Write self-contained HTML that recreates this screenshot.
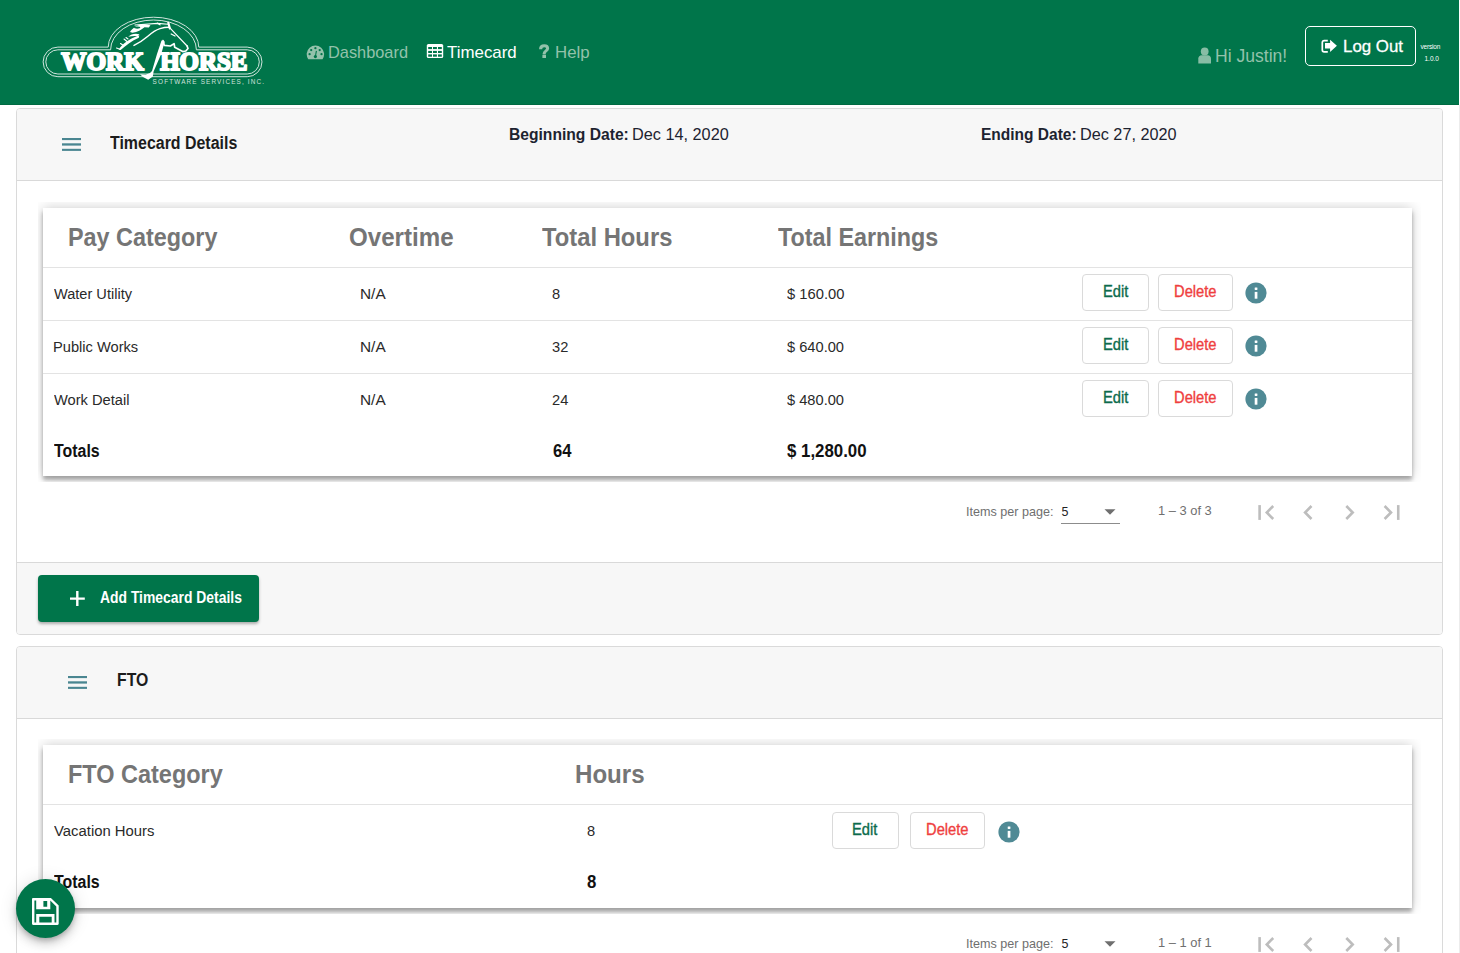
<!DOCTYPE html>
<html><head><meta charset="utf-8"><style>
*{box-sizing:border-box;margin:0;padding:0}
html,body{width:1460px;height:953px;overflow:hidden;background:#fff;font-family:"Liberation Sans",sans-serif;color:#212121}
.t{position:absolute;white-space:nowrap;line-height:1}
.td{color:#2a2a2a}
.a{position:absolute}
#hdr{position:absolute;left:0;top:0;width:1459px;height:105px;background:#00754a;box-shadow:inset 0 -1px 0 #006a42}
.nav{color:#93c2ab}
.card{position:absolute;left:16px;width:1427px;background:#fff;border:1px solid #dadada;border-radius:4px;overflow:hidden}
.sec{position:absolute;left:0;width:100%;background:#f7f7f7}
.tbl{position:absolute;width:1369px;background:#fff;box-shadow:0 4px 4px rgba(0,0,0,.3),0 0 12px rgba(0,0,0,.2)}
.th{font-weight:bold;color:#757575}
.hl{position:absolute;left:43px;width:1369px;height:1px;background:#e3e3e3}
.btn{position:absolute;height:37px;border:1px solid #dadada;border-radius:4px;background:#fff}
.edit{color:#0c6b4c;-webkit-text-stroke:0.35px #0c6b4c}
.del{color:#ef3f3f;-webkit-text-stroke:0.35px #ef3f3f}
.pg{color:#6f6f6f}
</style></head><body>
<div id="hdr"></div>
<div class="a" style="left:1459px;top:105px;width:1px;height:848px;background:#ececec"></div>
<div class="t nav" style="left:327.76px;top:44.12px;font-size:17.39px;transform:scaleX(0.9410);transform-origin:0 0;">Dashboard</div>
<div class="t " style="left:446.60px;top:44.12px;font-size:17.39px;transform:scaleX(0.9718);transform-origin:0 0;color:#fff">Timecard</div>
<div class="t nav" style="left:554.63px;top:44.12px;font-size:17.39px;transform:scaleX(0.9676);transform-origin:0 0;">Help</div>
<div class="t nav" style="left:1214.92px;top:47.53px;font-size:17.97px;transform:scaleX(0.9775);transform-origin:0 0;">Hi Justin!</div>
<div class="a" style="left:1305px;top:26px;width:111px;height:40px;border:1.2px solid #fff;border-radius:5px"></div>
<div class="t " style="left:1343.32px;top:38.44px;font-size:17.25px;transform:scaleX(0.9783);transform-origin:0 0;color:#fff;-webkit-text-stroke:0.3px #fff">Log Out</div>
<div class="t " style="left:1420.5px;top:43.98px;font-size:6.5px;color:#fff;letter-spacing:-0.2px">version</div>
<div class="t " style="left:1424.5px;top:56.48px;font-size:6.5px;color:#fff">1.0.0</div>
<div class="card" style="top:108px;height:527px"><div class="sec" style="top:0;height:72px;border-bottom:1px solid #d9d9d9"></div><div class="sec" style="top:453px;height:74px;border-top:1px solid #d9d9d9"></div></div>
<div class="t " style="left:110.40px;top:133.68px;font-size:18.26px;transform:scaleX(0.8731);transform-origin:0 0;font-weight:bold;color:#1c1c1c">Timecard Details</div>
<div class="t " style="left:509.05px;top:126.96px;font-size:16.52px;transform:scaleX(0.9460);transform-origin:0 0;font-weight:bold;color:#1d2330">Beginning Date:</div>
<div class="t " style="left:631.82px;top:126.96px;font-size:16.52px;transform:scaleX(0.9845);transform-origin:0 0;color:#1d2330">Dec 14, 2020</div>
<div class="t " style="left:980.97px;top:126.83px;font-size:16.67px;transform:scaleX(0.9310);transform-origin:0 0;font-weight:bold;color:#1d2330">Ending Date:</div>
<div class="t " style="left:1080.23px;top:126.83px;font-size:16.67px;transform:scaleX(0.9742);transform-origin:0 0;color:#1d2330">Dec 27, 2020</div>
<div class="a" style="left:38px;top:202px;width:1383px;height:280px;overflow:hidden"><div class="tbl" style="left:5px;top:6px;height:268px"></div></div>
<div class="t th" style="left:68.11px;top:224.02px;font-size:26.09px;transform:scaleX(0.8964);transform-origin:0 0;">Pay Category</div>
<div class="t th" style="left:349.47px;top:224.02px;font-size:26.09px;transform:scaleX(0.9252);transform-origin:0 0;">Overtime</div>
<div class="t th" style="left:542.30px;top:224.02px;font-size:26.09px;transform:scaleX(0.9120);transform-origin:0 0;">Total Hours</div>
<div class="t th" style="left:778.00px;top:224.02px;font-size:26.09px;transform:scaleX(0.8944);transform-origin:0 0;">Total Earnings</div>
<div class="hl" style="top:267px"></div>
<div class="hl" style="top:320px"></div>
<div class="hl" style="top:373px"></div>
<div class="t td" style="left:53.80px;top:285.62px;font-size:15.51px;transform:scaleX(0.9398);transform-origin:0 0;">Water Utility</div>
<div class="t td" style="left:360.41px;top:285.62px;font-size:15.51px;transform:scaleX(0.9920);transform-origin:0 0;">N/A</div>
<div class="t td" style="left:552.45px;top:285.62px;font-size:15.51px;transform:scaleX(0.9450);transform-origin:0 0;">8</div>
<div class="t td" style="left:787.15px;top:285.62px;font-size:15.51px;transform:scaleX(0.9508);transform-origin:0 0;">$ 160.00</div>
<div class="btn" style="left:1082px;top:274px;width:67px"></div><div class="btn" style="left:1158px;top:274px;width:75px"></div>
<div class="t edit" style="left:1102.77px;top:283.67px;font-size:15.8px;transform:scaleX(0.9308);transform-origin:0 0;">Edit</div>
<div class="t del" style="left:1173.97px;top:283.67px;font-size:15.8px;transform:scaleX(0.9318);transform-origin:0 0;">Delete</div>
<svg class="a" style="left:1245px;top:282px" width="22" height="22" viewBox="0 0 22 22"><circle cx="11" cy="11" r="10.6" fill="#508a95"/><rect x="9.7" y="5.4" width="2.7" height="2.6" rx="0.4" fill="#fff"/><rect x="9.7" y="9.9" width="2.7" height="6.8" fill="#fff"/></svg>
<div class="t td" style="left:52.85px;top:338.62px;font-size:15.51px;transform:scaleX(0.9450);transform-origin:0 0;">Public Works</div>
<div class="t td" style="left:360.41px;top:338.62px;font-size:15.51px;transform:scaleX(0.9920);transform-origin:0 0;">N/A</div>
<div class="t td" style="left:552.45px;top:338.62px;font-size:15.51px;transform:scaleX(0.9450);transform-origin:0 0;">32</div>
<div class="t td" style="left:787.15px;top:338.62px;font-size:15.51px;transform:scaleX(0.9450);transform-origin:0 0;">$ 640.00</div>
<div class="btn" style="left:1082px;top:327px;width:67px"></div><div class="btn" style="left:1158px;top:327px;width:75px"></div>
<div class="t edit" style="left:1102.77px;top:336.67px;font-size:15.8px;transform:scaleX(0.9308);transform-origin:0 0;">Edit</div>
<div class="t del" style="left:1173.97px;top:336.67px;font-size:15.8px;transform:scaleX(0.9318);transform-origin:0 0;">Delete</div>
<svg class="a" style="left:1245px;top:335px" width="22" height="22" viewBox="0 0 22 22"><circle cx="11" cy="11" r="10.6" fill="#508a95"/><rect x="9.7" y="5.4" width="2.7" height="2.6" rx="0.4" fill="#fff"/><rect x="9.7" y="9.9" width="2.7" height="6.8" fill="#fff"/></svg>
<div class="t td" style="left:53.80px;top:391.62px;font-size:15.51px;transform:scaleX(0.9450);transform-origin:0 0;">Work Detail</div>
<div class="t td" style="left:360.41px;top:391.62px;font-size:15.51px;transform:scaleX(0.9920);transform-origin:0 0;">N/A</div>
<div class="t td" style="left:552.45px;top:391.62px;font-size:15.51px;transform:scaleX(0.9450);transform-origin:0 0;">24</div>
<div class="t td" style="left:787.15px;top:391.62px;font-size:15.51px;transform:scaleX(0.9450);transform-origin:0 0;">$ 480.00</div>
<div class="btn" style="left:1082px;top:380px;width:67px"></div><div class="btn" style="left:1158px;top:380px;width:75px"></div>
<div class="t edit" style="left:1102.77px;top:389.67px;font-size:15.8px;transform:scaleX(0.9308);transform-origin:0 0;">Edit</div>
<div class="t del" style="left:1173.97px;top:389.67px;font-size:15.8px;transform:scaleX(0.9318);transform-origin:0 0;">Delete</div>
<svg class="a" style="left:1245px;top:388px" width="22" height="22" viewBox="0 0 22 22"><circle cx="11" cy="11" r="10.6" fill="#508a95"/><rect x="9.7" y="5.4" width="2.7" height="2.6" rx="0.4" fill="#fff"/><rect x="9.7" y="9.9" width="2.7" height="6.8" fill="#fff"/></svg>
<div class="t " style="left:53.50px;top:443.04px;font-size:17.83px;transform:scaleX(0.8922);transform-origin:0 0;font-weight:bold;color:#111">Totals</div>
<div class="t " style="left:552.57px;top:443.04px;font-size:17.83px;transform:scaleX(0.9316);transform-origin:0 0;font-weight:bold;color:#111">64</div>
<div class="t " style="left:786.66px;top:443.04px;font-size:17.83px;transform:scaleX(0.9446);transform-origin:0 0;font-weight:bold;color:#111">$ 1,280.00</div>
<div class="t pg" style="left:965.99px;top:506.01px;font-size:12.46px;transform:scaleX(1.0119);transform-origin:0 0;">Items per page:</div>
<div class="t " style="left:1061.60px;top:506.01px;font-size:12.46px;color:#222">5</div>
<div class="a" style="left:1061px;top:523px;width:59px;height:1px;background:#8c8c8c"></div><svg class="a" style="left:1103.5px;top:508.5px" width="12" height="6" viewBox="0 0 12 6"><path d="M0.5 0.3H11.5L6 5.8Z" fill="#6f6f6f"/></svg>
<div class="t pg" style="left:1157.57px;top:505.14px;font-size:12.54px;transform:scaleX(1.0294);transform-origin:0 0;">1 – 3 of 3</div>
<svg class="a" style="left:1250px;top:500px" width="160" height="26" viewBox="0 0 160 26" fill="none" stroke="#bdbdbd" stroke-width="2.6"><path d="M9.6 5.1V19.9"/><path d="M23.2 6L16.8 12.5L23.2 19"/><path d="M61.5 6L55.1 12.5L61.5 19"/><path d="M96.3 6L102.7 12.5L96.3 19"/><path d="M134.6 6L141 12.5L134.6 19"/><path d="M148.25 5.1V19.9"/></svg>
<div class="a" style="left:38px;top:575px;width:221px;height:47px;background:#00754a;border-radius:4px;box-shadow:0 2px 3px rgba(0,0,0,.3)"></div>
<svg class="a" style="left:69px;top:590px" width="17" height="17" viewBox="0 0 17 17"><path d="M8.3 1V16M1 8.6H15.8" stroke="#fff" stroke-width="2.4"/></svg>
<div class="t " style="left:99.92px;top:589.97px;font-size:15.8px;transform:scaleX(0.8800);transform-origin:0 0;font-weight:bold;color:#fff">Add Timecard Details</div>
<div class="card" style="top:646px;height:330px"><div class="sec" style="top:0;height:72px;border-bottom:1px solid #d9d9d9"></div></div>
<div class="t " style="left:116.91px;top:672.24px;font-size:17.83px;transform:scaleX(0.8853);transform-origin:0 0;font-weight:bold;color:#1c1c1c">FTO</div>
<div class="a" style="left:38px;top:739px;width:1383px;height:175px;overflow:hidden"><div class="tbl" style="left:5px;top:6px;height:163px"></div></div>
<div class="t th" style="left:68.08px;top:762.27px;font-size:25.8px;transform:scaleX(0.9101);transform-origin:0 0;">FTO Category</div>
<div class="t th" style="left:575.25px;top:761.22px;font-size:26.09px;transform:scaleX(0.9236);transform-origin:0 0;">Hours</div>
<div class="hl" style="top:804px"></div>
<div class="t td" style="left:53.70px;top:822.62px;font-size:15.51px;transform:scaleX(0.9587);transform-origin:0 0;">Vacation Hours</div>
<div class="t td" style="left:586.95px;top:822.62px;font-size:15.51px;transform:scaleX(0.9450);transform-origin:0 0;">8</div>
<div class="btn" style="left:832px;top:812px;width:67px"></div><div class="btn" style="left:910px;top:812px;width:75px"></div>
<div class="t edit" style="left:852.47px;top:821.97px;font-size:15.8px;transform:scaleX(0.9308);transform-origin:0 0;">Edit</div>
<div class="t del" style="left:925.97px;top:821.97px;font-size:15.8px;transform:scaleX(0.9318);transform-origin:0 0;">Delete</div>
<svg class="a" style="left:997.5px;top:821px" width="22" height="22" viewBox="0 0 22 22"><circle cx="11" cy="11" r="10.6" fill="#508a95"/><rect x="9.7" y="5.4" width="2.7" height="2.6" rx="0.4" fill="#fff"/><rect x="9.7" y="9.9" width="2.7" height="6.8" fill="#fff"/></svg>
<div class="t " style="left:53.50px;top:873.64px;font-size:17.83px;transform:scaleX(0.8922);transform-origin:0 0;font-weight:bold;color:#111">Totals</div>
<div class="t " style="left:587.16px;top:873.64px;font-size:17.83px;transform:scaleX(0.9400);transform-origin:0 0;font-weight:bold;color:#111">8</div>
<div class="t pg" style="left:965.99px;top:938.41px;font-size:12.46px;transform:scaleX(1.0119);transform-origin:0 0;">Items per page:</div>
<div class="t " style="left:1061.60px;top:938.41px;font-size:12.46px;color:#222">5</div>
<div class="a" style="left:1061px;top:955.4px;width:59px;height:1px;background:#8c8c8c"></div><svg class="a" style="left:1103.5px;top:940.9px" width="12" height="6" viewBox="0 0 12 6"><path d="M0.5 0.3H11.5L6 5.8Z" fill="#6f6f6f"/></svg>
<div class="t pg" style="left:1157.57px;top:936.54px;font-size:12.54px;transform:scaleX(1.0294);transform-origin:0 0;">1 – 1 of 1</div>
<svg class="a" style="left:1250px;top:932.4px" width="160" height="26" viewBox="0 0 160 26" fill="none" stroke="#bdbdbd" stroke-width="2.6"><path d="M9.6 5.1V19.9"/><path d="M23.2 6L16.8 12.5L23.2 19"/><path d="M61.5 6L55.1 12.5L61.5 19"/><path d="M96.3 6L102.7 12.5L96.3 19"/><path d="M134.6 6L141 12.5L134.6 19"/><path d="M148.25 5.1V19.9"/></svg>
<svg class="a" style="left:62px;top:138px" width="20" height="14" viewBox="0 0 20 14"><g fill="#4a8691"><rect x="0" y="0" width="19" height="2.1"/><rect x="0" y="5.3" width="19" height="2.3"/><rect x="0" y="10.8" width="19" height="2.1"/></g></svg>
<svg class="a" style="left:68px;top:676px" width="20" height="14" viewBox="0 0 20 14"><g fill="#4a8691"><rect x="0" y="0" width="19" height="2.1"/><rect x="0" y="5.3" width="19" height="2.3"/><rect x="0" y="10.8" width="19" height="2.1"/></g></svg>
<div class="a" style="left:16px;top:879px;width:59px;height:59px;border-radius:50%;background:#00754a;box-shadow:0 3px 5px -1px rgba(0,0,0,.2),0 6px 10px 0 rgba(0,0,0,.14),0 1px 18px 0 rgba(0,0,0,.12)"></div>
<svg class="a" style="left:306px;top:45px" width="19" height="15" viewBox="0 0 19 15"><path fill="#93c2ab" d="M2.28 14.2A8.7 8.7 0 1 1 16.52 14.2Z"/><g fill="#00754a"><circle cx="3.6" cy="9.2" r="1.15"/><circle cx="5.2" cy="5.1" r="1.15"/><circle cx="9.4" cy="3.2" r="1.15"/><circle cx="13.7" cy="5.1" r="1.15"/><circle cx="15.5" cy="9.2" r="1.15"/><circle cx="9.4" cy="11.6" r="1.6"/></g><path d="M9.4 11.5L10.4 5.8" stroke="#00754a" stroke-width="1.1"/></svg>
<svg class="a" style="left:426px;top:44px" width="18" height="15" viewBox="0 0 18 15"><rect x="0.8" y="0.1" width="16.4" height="13.8" rx="1.5" fill="#fff"/><g fill="#00754a"><rect x="2.2" y="3" width="3.8" height="2.1"/><rect x="7" y="3" width="3.9" height="2.1"/><rect x="12" y="3" width="3.8" height="2.1"/><rect x="2.2" y="6.9" width="3.8" height="2.1"/><rect x="7" y="6.9" width="3.9" height="2.1"/><rect x="12" y="6.9" width="3.8" height="2.1"/><rect x="2.2" y="10.4" width="3.8" height="2.3"/><rect x="7" y="10.4" width="3.9" height="2.3"/><rect x="12" y="10.4" width="3.8" height="2.3"/></g></svg>
<svg class="a" style="left:538px;top:44px" width="13" height="16" viewBox="0 0 13 16"><path d="M2.6 5.2C2.6 2.6 4.6 1.8 6.3 1.8C8.3 1.8 9.6 3 9.6 4.6C9.6 6.8 6.2 7 6.2 9.6V10.4" fill="none" stroke="#93c2ab" stroke-width="3.1"/><rect x="4.4" y="11" width="3.6" height="3" fill="#93c2ab"/></svg>
<svg class="a" style="left:1197px;top:47px" width="15" height="17" viewBox="0 0 15 17"><circle cx="7.7" cy="4.5" r="3.9" fill="#88bda5"/><path d="M1.3 11.5C1.3 9.5 2.8 8.2 4.6 8.2H10.8C12.6 8.2 14 9.5 14 11.5V16.4H1.3Z" fill="#88bda5"/></svg>
<svg class="a" style="left:1320px;top:38px" width="18" height="15" viewBox="0 0 18 15"><path d="M7.8 2.7H4.2C3 2.7 2.3 3.4 2.3 4.6V11.9C2.3 13.1 3 13.8 4.2 13.8H7.8" fill="none" stroke="#fff" stroke-width="1.7"/><path d="M5 5H10.1V1.8L16.9 7.8L10.1 13.9V10.6H5Z" fill="#fff"/></svg>
<svg class="a" style="left:31.7px;top:898.2px" width="27" height="27" viewBox="0 0 27 27"><path fill="#fff" fill-rule="evenodd" d="M1.2 0H18.9L26.7 7.4V25.8C26.7 26.5 26.2 27 25.5 27H1.2C0.5 27 0 26.5 0 25.8V1.2C0 0.5 0.5 0 1.2 0Z M2.4 2.5V24.6H4.2V15.9H22.5V24.6H24.3V8.4L18.3 2.5V11.3H4.2V2.5Z M7.3 18.7V24.6H19.7V18.7Z M11.4 3V8.7H15.2V3Z"/></svg>
<svg class="a" style="left:40px;top:12px" width="230" height="78" viewBox="0 0 230 78"><g fill="none" stroke="#fff" stroke-width="1" opacity="0.82"><path d="M68.2 35.1H17.9A14.8 14.8 0 0 0 17.9 64.7H207.2A14.8 14.8 0 0 0 207.2 35.1H158.8A45.3 29.9 0 0 0 68.2 35.1Z"/><path d="M70.6 37.8H17.9A12.1 12.1 0 0 0 17.9 62H207.2A12.1 12.1 0 0 0 207.2 37.8H156.4A42.9 29.8 0 0 0 70.6 37.8Z"/></g><rect x="96" y="34" width="40" height="5" fill="#00754a"/><g fill="none" stroke="#fff" stroke-linecap="round" stroke-linejoin="round"><path d="M94 33.4C100 30.5 104 27.5 107.5 24.5C112 20.5 116 17.8 120 16.6C123.5 15.6 126 15.3 128.6 15.3" stroke-width="1.5"/><path d="M130.1 16.2L147.1 34" stroke-width="1.2"/><path d="M128.3 10.8L129.8 16.4" stroke-width="2.2"/><path d="M95 13L117.5 11.4L128 12.3" stroke-width="1.1"/><path d="M117.5 11.2L120 12.8" stroke-width="1.3"/><path d="M123 28.5L124.3 33.4L130.4 34L134.1 31.6L134.7 35.3L142.7 39.6L145.8 39L148 36.5L147.1 34" stroke-width="1.7"/><path d="M131.2 22L135 24" stroke-width="1.3"/><path d="M80.5 31.5L83.5 33.5M84 27L87 29.5M76.5 36L80 37.2M86 25.5L88 27" stroke-width="1.1"/></g><g fill="#fff"><path d="M90 20C92.5 16 97 12.8 104 12.3L110.5 13.2L108.8 15.6L104.5 15.2C101.5 17.8 97.5 19.8 92.5 20.8Z"/><path d="M88.3 24.8C91 22.2 95 21 99.5 22.3L97.5 24.3C94.5 23.8 91.5 24.2 88.3 24.8Z"/><path d="M78.6 37.8C82.5 32 88.5 27 99.3 23.3L98.8 25.7C91.5 28.7 86.5 33 80.6 38Z"/></g><ellipse cx="97.2" cy="15.6" rx="3.2" ry="1.1" fill="#00754a"/><path fill="#fff" d="M121.5 28.5L124.8 29.5L121.2 42L113.6 59.5L112.8 64.5L108.2 67.8L103 65L100 62.3L105.5 62.8L110 61L112 59L117 42Z"/><g font-family="Liberation Serif" font-weight="bold" font-size="24.8" fill="#fff" stroke="#fff" stroke-width="2.1" stroke-linejoin="round"><text x="21.2" y="58.3" textLength="82.6" lengthAdjust="spacingAndGlyphs">WORK</text><text x="120.2" y="58.3" textLength="87.2" lengthAdjust="spacingAndGlyphs">HORSE</text></g><text x="112.6" y="72.2" font-family="Liberation Sans" font-size="6.4" fill="#fff" opacity="0.8" textLength="111.5" lengthAdjust="spacing">SOFTWARE SERVICES, INC.</text></svg>
</body></html>
